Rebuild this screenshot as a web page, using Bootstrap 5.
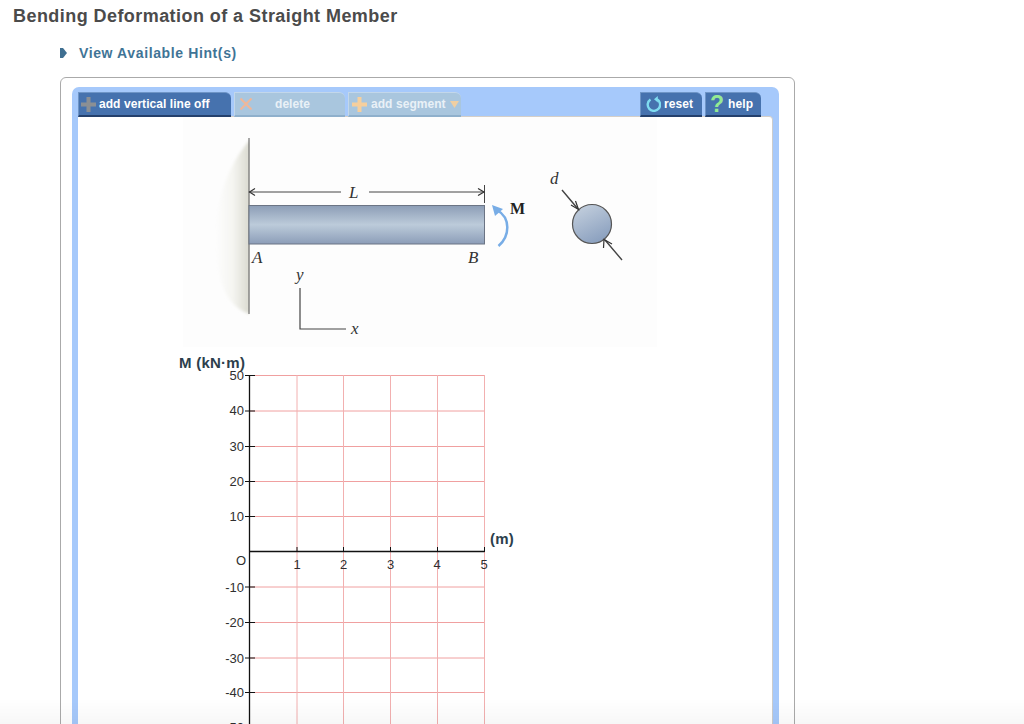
<!DOCTYPE html>
<html lang="en">
<head>
<meta charset="utf-8">
<title>Bending Deformation of a Straight Member</title>
<link href="https://cdn.jsdelivr.net/npm/bootstrap@5.3.0/dist/css/bootstrap.min.css" rel="stylesheet">
<style>
html,body{height:724px;overflow:hidden;background:#fff}
body{font-family:"Liberation Sans",Arial,sans-serif}
.page-title{font-size:18px;font-weight:700;color:#4b4b4b;letter-spacing:.44px;line-height:21px;margin:6px 0 0 13px}
.hint-row{margin:16px 0 0 60px;height:20px;gap:12px;color:#3f7496;font-size:14px;font-weight:700;letter-spacing:.62px;text-decoration:none}
.outer-box{margin:14px 0 0 60px;width:735px;height:700px;border:1px solid #aaa;border-radius:6px 6px 0 0;padding:9px 15px 0 11px}
.tool-panel{background:#a6c9fb;border-radius:7px 7px 0 0;padding:5px 6px 0;height:700px}
.tool-bar{height:25px;gap:3px;padding-right:12px}
.tool-btn{display:flex;align-items:center;height:25px;padding:0;border:0;border-top:1px solid #6f95c6;border-left:1px solid #6f95c6;border-bottom:2px solid #24406c;border-top-right-radius:6px;background:#4672ae;color:#fff;font-size:12px;font-weight:700;letter-spacing:.06px;white-space:nowrap}
.tool-btn.is-off{background:#a9c6de;border-top-color:#c3d7ea;border-left-color:#c3d7ea;border-bottom-color:#8fb0cc;color:#e9f1f7}
.btn-vline{width:153px;padding-left:2px;gap:3px}
.btn-delete{width:111px;padding-left:4px}
.btn-delete span{margin-left:22px}
.btn-seg{width:113px;padding-left:3px;gap:4px}
.btn-reset{width:62px;padding-left:5px;gap:3px}
.btn-help{width:56px;padding-left:4px;gap:4px}
.q-mark{font-size:23px;line-height:20px;color:#95ea93;font-weight:700}
.canvas-area{background:#fff;border-top:1px solid #d5cfc8;border-right:1px solid #ccc;border-top-right-radius:4px;height:680px;margin-top:-1px}
.canvas-area svg{display:block}
.bottom-fade{position:fixed;left:0;right:0;bottom:0;height:26px;background:linear-gradient(rgba(0,0,0,0),rgba(0,0,0,.03));pointer-events:none}
.ax{font:13px "Liberation Sans",Arial,sans-serif;fill:#2f2f2f}
.ax-e{text-anchor:end}
.ax-m{text-anchor:middle}
.ax-b{font:700 15px "Liberation Sans",Arial,sans-serif;fill:#2c404c;letter-spacing:.25px}
.fig{font:italic 17px "Liberation Serif","Times New Roman",serif;fill:#333}
.fig-m{font:700 16px "Liberation Serif","Times New Roman",serif;fill:#222}
</style>
</head>
<body>
<div class="page-title">Bending Deformation of a Straight Member</div>
<a class="hint-row d-flex align-items-center" href="#">
  <svg width="7" height="10" viewBox="0 0 7 10"><path d="M0 0L3 0L7 5L3 10L0 10Z" fill="#3f6f91"/></svg>
  <span>View Available Hint(s)</span>
</a>
<div class="outer-box">
  <div class="tool-panel">
    <div class="tool-bar d-flex">
      <div class="tool-btn btn-vline">
        <svg width="15" height="15" viewBox="0 0 15 15"><path d="M5.500 0h4v5.500h5.500v4H9.500V15h-4V9.500H0v-4h5.500z" fill="#8b8f94"/></svg>
        <span>add vertical line off</span>
      </div>
      <div class="tool-btn is-off btn-delete">
        <svg width="14" height="14" viewBox="0 0 14 14"><path d="M1.500 1.500L12.500 12.500M12.500 1.500L1.500 12.500" stroke="#eeb79a" stroke-width="2.200" fill="none"/></svg>
        <span>delete</span>
      </div>
      <div class="tool-btn is-off btn-seg">
        <svg width="15" height="15" viewBox="0 0 15 15"><path d="M5.500 0h4v5.500h5.500v4H9.500V15h-4V9.500H0v-4h5.500z" fill="#f6cf9d"/></svg>
        <span>add segment</span>
        <svg width="9" height="7" viewBox="0 0 9 7"><path d="M0 0H9L4.500 7Z" fill="#f0cfa2"/></svg>
      </div>
      <div class="flex-grow-1"></div>
      <div class="tool-btn btn-reset">
        <svg width="15" height="16" viewBox="0 0 15 16"><path d="M4.500 3.500A6.200 6.200 0 1 0 11 3.300" stroke="#7fdcf0" stroke-width="2.400" fill="none"/><path d="M11.800 0V6.500L8 3.200Z" fill="#7fdcf0"/></svg>
        <span>reset</span>
      </div>
      <div class="tool-btn btn-help">
        <span class="q-mark">?</span>
        <span>help</span>
      </div>
    </div>
    <div class="canvas-area">
      <svg width="694" height="607" viewBox="78 117 694 607" role="img">
        <defs>
          <linearGradient id="wallG" x1="0" x2="1" y1="0" y2="0"><stop offset="0" stop-color="#fdfdfd"/><stop offset=".5" stop-color="#f5f5f1"/><stop offset="1" stop-color="#d9d9ce"/></linearGradient>
          <linearGradient id="beamG" x1="0" x2="0" y1="0" y2="1"><stop offset="0" stop-color="#8c9db6"/><stop offset=".5" stop-color="#bccbda"/><stop offset="1" stop-color="#8c9db8"/></linearGradient>
          <linearGradient id="discG" x1="0" x2=".5" y1="0" y2="1"><stop offset="0" stop-color="#c8d3e0"/><stop offset="1" stop-color="#8da2c0"/></linearGradient>
          <filter id="softEdge" x="-20%" y="-10%" width="140%" height="120%"><feGaussianBlur stdDeviation="1.500"/></filter>
        </defs>
        <rect x="183" y="117" width="474" height="230" fill="#fdfdfd"/>
        <!-- wall -->
        <path d="M250 140C232 160 219 190 216 225C214 265 220 305 250 314Z" fill="url(#wallG)" filter="url(#softEdge)"/>
        <rect x="249.500" y="130" width="6" height="190" fill="#fdfdfd"/>
        <path d="M249 138V314" stroke="#555" stroke-width="1" fill="none"/>
        <!-- beam -->
        <rect x="249" y="205.500" width="235.500" height="38.500" fill="url(#beamG)" stroke="#6b7484"/>
        <!-- dimension -->
        <path d="M249 192H341M369 192H484M484.500 185V203" stroke="#444" stroke-width="1" fill="none"/>
        <path d="M255 188.500L249.500 192L255 195.500M478 188.500L484 192L478 195.500" stroke="#333" stroke-width="1.200" fill="none"/>
        <text class="fig" x="349" y="198">L</text>
        <text class="fig" x="252" y="263">A</text>
        <text class="fig" x="468" y="263">B</text>
        <text class="fig" x="296" y="280">y</text>
        <text class="fig" x="351" y="334">x</text>
        <text class="fig" x="550" y="184">d</text>
        <text class="fig-m" x="510" y="214">M</text>
        <path d="M300 288V329H346" stroke="#444" stroke-width="1.200" fill="none"/>
        <!-- moment arrow -->
        <path d="M498.500 246C510 236 511 218 497 210" stroke="#78ade6" stroke-width="2.500" fill="none"/>
        <path d="M492 205L503 209L495 216Z" fill="#78ade6"/>
        <!-- disc -->
        <circle cx="592" cy="224" r="19.500" fill="url(#discG)" stroke="#555" stroke-width="1.200"/>
        <path d="M562 190L578 209M622 260L605 240" stroke="#444" stroke-width="1.400" fill="none"/>
        <path d="M571 205L578.500 209.500L575.500 201M603.500 248L604 239.500L612 244" stroke="#333" stroke-width="1.200" fill="none"/>
        <!-- grid -->
        <g stroke="#f0a0a0" stroke-width="1" fill="none">
          <path d="M249 375.500H484.500M249 411H484.500M249 446.500H484.500M249 481.500H484.500M249 516.500H484.500M249 587H484.500M249 622.500H484.500M249 658H484.500M249 692.500H484.500"/>
          <path d="M297 375V724M343.500 375V724M390.500 375V724M437.500 375V724M484.500 375V724" stroke="#f2b0b0"/>
        </g>
        <g stroke="#111" stroke-width="1" fill="none">
          <path d="M249.500 375V724" stroke-width="1.300"/>
          <path d="M249 551.500H484.500" stroke-width="1.300"/>
          <path d="M245 375.500H255M245 411H255M245 446.500H255M245 481.500H255M245 516.500H255M245 587H255M245 622.500H255M245 658H255M245 692.500H255"/>
          <path d="M297 547V552M343.500 547V552M390.500 547V552M437.500 547V552M484.500 547V552"/>
        </g>
        <g class="ax">
          <text class="ax ax-e" x="244" y="380">50</text>
          <text class="ax ax-e" x="244" y="415">40</text>
          <text class="ax ax-e" x="244" y="451">30</text>
          <text class="ax ax-e" x="244" y="486">20</text>
          <text class="ax ax-e" x="244" y="521">10</text>
          <text class="ax ax-e" x="246" y="565" font-style="italic">O</text>
          <text class="ax ax-e" x="244" y="592">-10</text>
          <text class="ax ax-e" x="244" y="627">-20</text>
          <text class="ax ax-e" x="244" y="663">-30</text>
          <text class="ax ax-e" x="244" y="697">-40</text>
          <text class="ax ax-e" x="244" y="732">-50</text>
          <text class="ax ax-m" x="297" y="569">1</text>
          <text class="ax ax-m" x="343.500" y="569">2</text>
          <text class="ax ax-m" x="390.500" y="569">3</text>
          <text class="ax ax-m" x="437" y="569">4</text>
          <text class="ax ax-m" x="484" y="569">5</text>
        </g>
        <text class="ax-b" x="179" y="368">M (kN·m)</text>
        <text class="ax-b" x="490" y="544">(m)</text>
      </svg>
    </div>
  </div>
</div>
<div class="bottom-fade"></div>
<script src="https://cdn.jsdelivr.net/npm/bootstrap@5.3.0/dist/js/bootstrap.bundle.min.js"></script>
</body>
</html>
